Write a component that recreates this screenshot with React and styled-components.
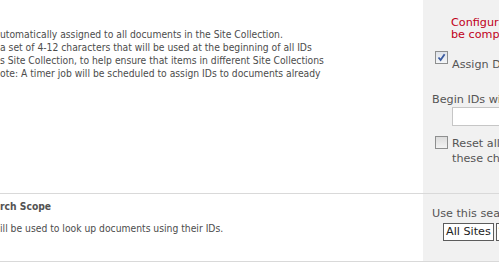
import React from 'react';
import styled, { createGlobalStyle } from 'styled-components';

const Global = createGlobalStyle`
  html, body {
    margin: 0;
    padding: 0;
    background: #fff;
  }
`;

const Page = styled.div`
  width: 499px;
  height: 262px;
  overflow: hidden;
  font-family: "DejaVu Sans Condensed", "DejaVu Sans", Verdana, sans-serif;
  font-size: 10.25px;
  color: #4c4c4c;
  white-space: nowrap;
`;

const Section = styled.div`
  display: grid;
  grid-template-columns: 423px 1fr;
  height: ${p => p.h}px;
  border-bottom: 1px solid #d9d9d9;
  box-sizing: border-box;
`;

const Desc = styled.div`
  padding-top: ${p => p.top}px;
  line-height: 13px;
  overflow: hidden;
`;

const Heading = styled.div`
  font-weight: bold;
  color: #525252;
  margin-bottom: 9px;
`;

const Panel = styled.div`
  background: #f1f1f1;
  padding: ${p => p.top}px 0 0 9px;
  overflow: hidden;
  line-height: 13px;
  font-family: "DejaVu Sans", Verdana, sans-serif;
  font-size: 11.2px;
  color: #555;
`;

const Warning = styled.div`
  color: #c0001a;
  padding-left: 19px;
  line-height: 12px;
  margin-bottom: 10px;
`;

const CheckRow = styled.label`
  display: flex;
  align-items: ${p => (p.low ? 'flex-end' : 'flex-start')};
  gap: 4px;
  padding-left: 3px;
`;

const Box = styled.span`
  flex: none;
  width: 11px;
  height: 11px;
  border: 1px solid #8e8f8f;
  background: ${p => (p.checked ? 'linear-gradient(#dfe3ea, #f4f6f8)' : 'linear-gradient(#dcdcdc, #f3f3f3)')};
  display: flex;
  align-items: center;
  justify-content: center;
`;

const CheckText = styled.div`
  line-height: ${p => p.lh || 13}px;
  margin-bottom: ${p => p.mb || 0}px;
`;

const Label = styled.div`
  margin-bottom: 1px;
`;

const TextInput = styled.div`
  margin-left: 20px;
  width: 120px;
  height: 17px;
  background: #fff;
  border: 1px solid #c6c6c6;
  margin-bottom: 10px;
`;

const SelectRow = styled.div`
  display: flex;
  gap: 2px;
  margin: 3px 0 0 11px;
`;

const Select = styled.div`
  border: 1px solid #5c5c5c;
  background: #fff;
  color: #222;
  height: 16px;
  line-height: 16px;
  padding: 0 2px;
`;

export default function App() {
  return (
    <>
      <Global />
      <Page>
        <Section h={194}>
          <Desc top={28}>
            <div>utomatically assigned to all documents in the Site Collection.</div>
            <div>a set of 4-12 characters that will be used at the beginning of all IDs</div>
            <div>s Site Collection, to help ensure that items in different Site Collections</div>
            <div>ote: A timer job will be scheduled to assign IDs to documents already</div>
          </Desc>
          <Panel top={17}>
            <Warning>
              <div>Configuration may not</div>
              <div>be complete.</div>
            </Warning>
            <CheckRow low>
              <Box checked>
                <svg width="9" height="9" viewBox="0 0 9 9">
                  <path d="M1.5 4.5 L3.6 7 L7.6 1.2" fill="none" stroke="#3b5ba0" strokeWidth="1.8" />
                </svg>
              </Box>
              <CheckText mb={-7}>Assign Document IDs</CheckText>
            </CheckRow>
            <div style={{ height: 29 }} />
            <Label>Begin IDs with the following characters:</Label>
            <TextInput />
            <CheckRow>
              <Box />
              <CheckText lh={15}>
                <div>Reset all Document IDs in the Site Collection to begin with</div>
                <div>these characters.</div>
              </CheckText>
            </CheckRow>
          </Panel>
        </Section>
        <Section h={68}>
          <Desc top={6}>
            <Heading>rch Scope</Heading>
            <div>ill be used to look up documents using their IDs.</div>
          </Desc>
          <Panel top={13}>
            <Label>Use this search scope for ID lookup:</Label>
            <SelectRow>
              <Select>All Sites</Select>
              <Select>▼</Select>
            </SelectRow>
          </Panel>
        </Section>
      </Page>
    </>
  );
}
